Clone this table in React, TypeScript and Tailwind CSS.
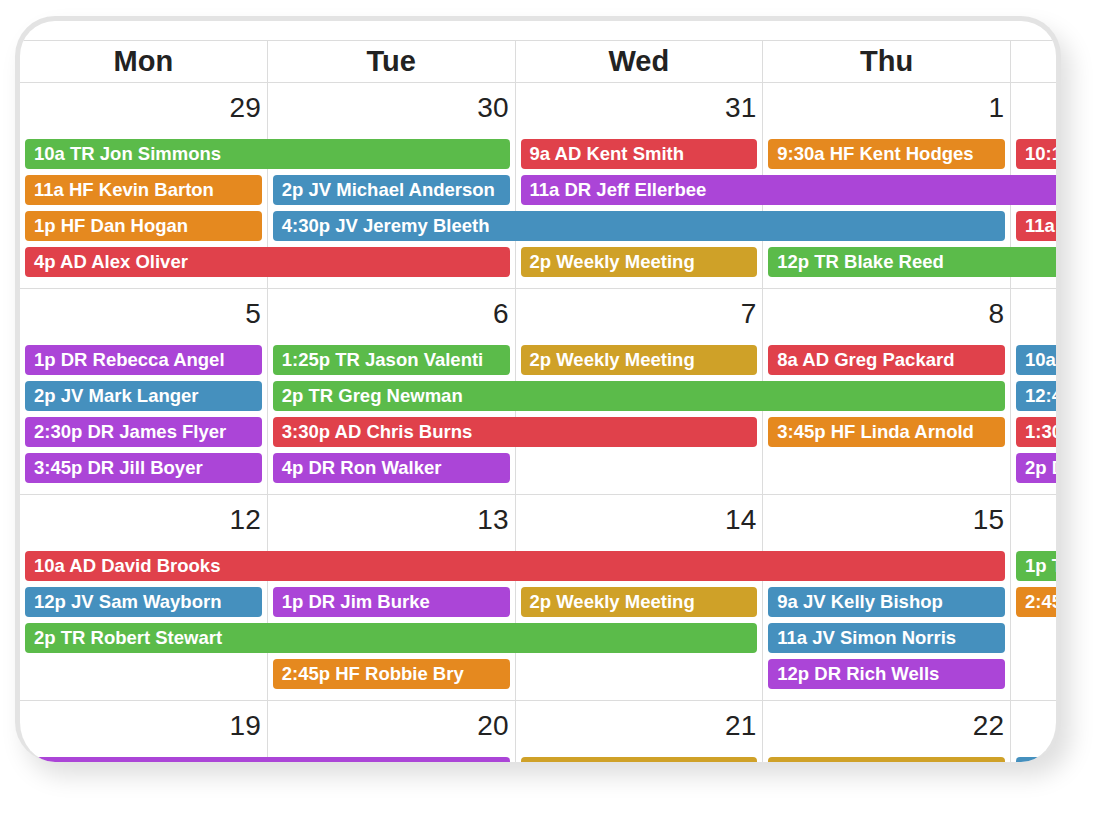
// Month calendar card (Mon–Fri), FullCalendar-ish look
type Ev = {
  col: number;
  span: number;
  row: number;
  label: string;
  color: string;
  cont?: boolean;
};

const green = 'bg-[#5bbb4a]';
const orange = 'bg-[#e5891f]';
const red = 'bg-[#e0414b]';
const blue = 'bg-[#4590be]';
const purple = 'bg-[#ab45d7]';
const gold = 'bg-[#cfa128]';

const colStart = ['', 'col-start-1', 'col-start-2', 'col-start-3', 'col-start-4', 'col-start-5'];
const colSpan = ['', 'col-span-1', 'col-span-2', 'col-span-3', 'col-span-4', 'col-span-5'];
const rowStart = ['', 'row-start-2', 'row-start-3', 'row-start-4', 'row-start-5'];

const days = ['Mon', 'Tue', 'Wed', 'Thu', 'Fri'];

const weeks: { dates: number[]; events: Ev[] }[] = [
  {
    dates: [29, 30, 31, 1, 2],
    events: [
      { col: 1, span: 2, row: 1, label: '10a TR Jon Simmons', color: green },
      { col: 3, span: 1, row: 1, label: '9a AD Kent Smith', color: red },
      { col: 4, span: 1, row: 1, label: '9:30a HF Kent Hodges', color: orange },
      { col: 5, span: 1, row: 1, label: '10:15a AD Paul Stone', color: red },
      { col: 1, span: 1, row: 2, label: '11a HF Kevin Barton', color: orange },
      { col: 2, span: 1, row: 2, label: '2p JV Michael Anderson', color: blue },
      { col: 3, span: 3, row: 2, label: '11a DR Jeff Ellerbee', color: purple, cont: true },
      { col: 1, span: 1, row: 3, label: '1p HF Dan Hogan', color: orange },
      { col: 2, span: 3, row: 3, label: '4:30p JV Jeremy Bleeth', color: blue },
      { col: 5, span: 1, row: 3, label: '11a AD Tom Grant', color: red },
      { col: 1, span: 2, row: 4, label: '4p AD Alex Oliver', color: red },
      { col: 3, span: 1, row: 4, label: '2p Weekly Meeting', color: gold },
      { col: 4, span: 2, row: 4, label: '12p TR Blake Reed', color: green, cont: true },
    ],
  },
  {
    dates: [5, 6, 7, 8, 9],
    events: [
      { col: 1, span: 1, row: 1, label: '1p DR Rebecca Angel', color: purple },
      { col: 2, span: 1, row: 1, label: '1:25p TR Jason Valenti', color: green },
      { col: 3, span: 1, row: 1, label: '2p Weekly Meeting', color: gold },
      { col: 4, span: 1, row: 1, label: '8a AD Greg Packard', color: red },
      { col: 5, span: 1, row: 1, label: '10a JV Lisa Grant', color: blue },
      { col: 1, span: 1, row: 2, label: '2p JV Mark Langer', color: blue },
      { col: 2, span: 3, row: 2, label: '2p TR Greg Newman', color: green },
      { col: 5, span: 1, row: 2, label: '12:45p JV Amy Cole', color: blue },
      { col: 1, span: 1, row: 3, label: '2:30p DR James Flyer', color: purple },
      { col: 2, span: 2, row: 3, label: '3:30p AD Chris Burns', color: red },
      { col: 4, span: 1, row: 3, label: '3:45p HF Linda Arnold', color: orange },
      { col: 5, span: 1, row: 3, label: '1:30p AD Ben Hart', color: red },
      { col: 1, span: 1, row: 4, label: '3:45p DR Jill Boyer', color: purple },
      { col: 2, span: 1, row: 4, label: '4p DR Ron Walker', color: purple },
      { col: 5, span: 1, row: 4, label: '2p DR Sue Lane', color: purple },
    ],
  },
  {
    dates: [12, 13, 14, 15, 16],
    events: [
      { col: 1, span: 4, row: 1, label: '10a AD David Brooks', color: red },
      { col: 5, span: 1, row: 1, label: '1p TR Dan West', color: green },
      { col: 1, span: 1, row: 2, label: '12p JV Sam Wayborn', color: blue },
      { col: 2, span: 1, row: 2, label: '1p DR Jim Burke', color: purple },
      { col: 3, span: 1, row: 2, label: '2p Weekly Meeting', color: gold },
      { col: 4, span: 1, row: 2, label: '9a JV Kelly Bishop', color: blue },
      { col: 5, span: 1, row: 2, label: '2:45p HF Kim Ross', color: orange },
      { col: 1, span: 3, row: 3, label: '2p TR Robert Stewart', color: green },
      { col: 4, span: 1, row: 3, label: '11a JV Simon Norris', color: blue },
      { col: 2, span: 1, row: 4, label: '2:45p HF Robbie Bry', color: orange },
      { col: 4, span: 1, row: 4, label: '12p DR Rich Wells', color: purple },
    ],
  },
  {
    dates: [19, 20, 21, 22, 23],
    events: [
      { col: 1, span: 2, row: 1, label: '10a DR Anna Price', color: purple },
      { col: 3, span: 1, row: 1, label: '2p Weekly Meeting', color: gold },
      { col: 4, span: 1, row: 1, label: '2p Weekly Meeting', color: gold },
      { col: 5, span: 1, row: 1, label: '9a JV Ray Moss', color: blue },
    ],
  },
];

function Week({ dates, events }: { dates: number[]; events: Ev[] }) {
  return (
    <div className="grid h-[206px] grid-cols-[repeat(5,247.75px)] grid-rows-[50px_repeat(4,30px)_1fr] gap-y-[6px]">
      {dates.map((d, i) => (
        <div
          key={i}
          className={`${colStart[i + 1]} row-span-full row-start-1 border-r border-b border-[#dcdcdc] pt-[8px] pr-[6px] text-right text-[28px] leading-[34px] text-[#222]`}
        >
          {d}
        </div>
      ))}
      {events.map((e, i) => (
        <div
          key={i}
          className={`${colStart[e.col]} ${colSpan[e.span]} ${rowStart[e.row]} ${e.color} ml-[5px] ${
            e.cont ? 'mr-0 rounded-l-[4px]' : 'mr-[6px] rounded-[4px]'
          } overflow-hidden whitespace-nowrap pl-[9px] text-[18.5px] font-bold leading-[30px] text-white`}
        >
          {e.label}
        </div>
      ))}
    </div>
  );
}

export default function App() {
  return (
    <div className="h-[817px] w-[1100px] bg-white font-['Liberation_Sans',Arial,sans-serif]">
      <div className="ml-[15px] pt-[16px]">
        <div className="h-[746px] w-[1046px] overflow-hidden rounded-[40px] border-[5px] border-b-0 border-[#e3e3e3] bg-white pt-[19px] shadow-[10px_14px_24px_rgba(0,0,0,0.13)]">
          <div className="grid grid-cols-[repeat(5,247.75px)] border-t border-b border-[#dcdcdc]">
            {days.map((d) => (
              <div
                key={d}
                className="border-r border-[#dcdcdc] text-center text-[29px] font-bold leading-[41px] text-[#222]"
              >
                {d}
              </div>
            ))}
          </div>
          {weeks.map((w, i) => (
            <Week key={i} dates={w.dates} events={w.events} />
          ))}
        </div>
      </div>
    </div>
  );
}
